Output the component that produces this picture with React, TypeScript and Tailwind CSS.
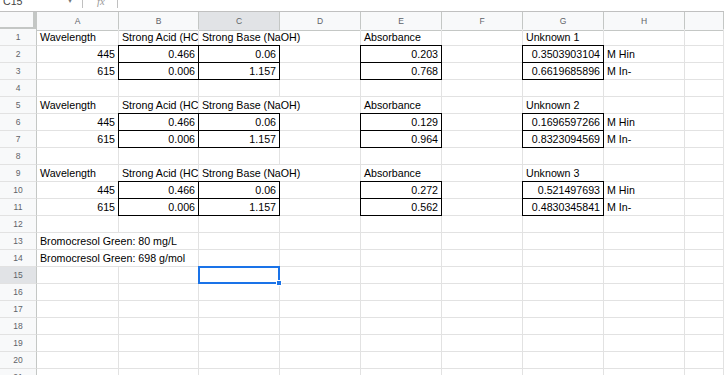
import React from 'react';

type Cell = { c: number; t: string; num?: boolean; box?: boolean; span?: number; clip?: boolean };

const COLS = ['A', 'B', 'C', 'D', 'E', 'F', 'G', 'H', ''];

// one block of readings: header row + two wavelengths
const block = (e: [string, string], unknown: string, g: [string, string]): Cell[][] => [
  [
    { c: 0, t: 'Wavelength' },
    { c: 1, t: 'Strong Acid (HCl)', clip: true },
    { c: 2, t: 'Strong Base (NaOH)', span: 2 },
    { c: 4, t: 'Absorbance' },
    { c: 6, t: unknown },
  ],
  [
    { c: 0, t: '445', num: true },
    { c: 1, t: '0.466', num: true, box: true },
    { c: 2, t: '0.06', num: true, box: true },
    { c: 4, t: e[0], num: true, box: true },
    { c: 6, t: g[0], num: true, box: true },
    { c: 7, t: 'M Hin' },
  ],
  [
    { c: 0, t: '615', num: true },
    { c: 1, t: '0.006', num: true, box: true },
    { c: 2, t: '1.157', num: true, box: true },
    { c: 4, t: e[1], num: true, box: true },
    { c: 6, t: g[1], num: true, box: true },
    { c: 7, t: 'M In-' },
  ],
];

const rows: Cell[][] = [
  ...block(['0.203', '0.768'], 'Unknown 1', ['0.3503903104', '0.6619685896']),
  [],
  ...block(['0.129', '0.964'], 'Unknown 2', ['0.1696597266', '0.8323094569']),
  [],
  ...block(['0.272', '0.562'], 'Unknown 3', ['0.521497693', '0.4830345841']),
  [],
  [{ c: 0, t: 'Bromocresol Green: 80 mg/L', span: 2 }],
  [{ c: 0, t: 'Bromocresol Green: 698 g/mol', span: 2 }],
  [], [], [], [], [], [], [], [],
];

const SEL_ROW = 15;
const SEL_COL = 2;

export default function App() {
  return (
    <div className="h-screen w-full overflow-hidden bg-white font-['Liberation_Sans',Arial,sans-serif] text-black">
      {/* formula bar (scrolled, only the bottom shows) */}
      <div className="h-[12px] overflow-hidden border-b border-[#c0c0c0]">
        <div className="-mt-[7px] flex h-[15px] items-center text-[10.67px] text-[#444]">
          <span className="w-[68px] pl-[3px]">C15</span>
          <span className="w-[14px] text-[8px] text-[#777]">▾</span>
          <span className="h-full w-px bg-[#c0c0c0]" />
          <span className="w-[34px] pl-[14px] font-['Liberation_Serif',serif] italic text-[#999]">fx</span>
          <span className="h-full w-px bg-[#c0c0c0]" />
        </div>
      </div>

      <div className="grid grid-cols-[37px_82px_80px_81px_81px_81px_81px_81px_81px_1fr] auto-rows-[17px]">
        {/* column headers */}
        <div className="h-[19px] border-b-[4px] border-r-[4px] border-[#c4c7c5] bg-[#f8f9fa]" />
        {COLS.map((l, i) => (
          <div
            key={l + i}
            className={`flex h-[19px] items-center justify-center border-b border-r border-[#c4c7c5] text-[8.5px] text-[#5f6368] ${
              i === SEL_COL ? 'bg-[#e1e3e6]' : 'bg-[#f8f9fa]'
            }`}
          >
            {l}
          </div>
        ))}

        {rows.map((row, r) => {
          const n = r + 1;
          const out: React.ReactNode[] = [];
          out.push(
            <div
              key={`h${n}`}
              className={`flex items-center justify-center border-b border-r border-b-[#e2e2e2] border-r-[#c4c7c5] text-[8.5px] text-[#5f6368] ${
                n === SEL_ROW ? 'bg-[#e1e3e6]' : 'bg-[#f8f9fa]'
              }`}
            >
              {n}
            </div>
          );
          let c = 0;
          while (c < COLS.length) {
            const cell = row.find((x) => x.c === c);
            const span = cell?.span ?? 1;
            const selected = n === SEL_ROW && c === SEL_COL;
            out.push(
              <div
                key={`${n}-${c}`}
                className={`relative flex items-end whitespace-nowrap border-b border-r border-[#e2e2e2] px-[3px] pb-[1px] text-[10.67px] leading-[13px] ${
                  span === 2 ? 'col-span-2' : ''
                } ${cell?.num ? 'justify-end' : ''} ${cell?.clip ? 'overflow-hidden' : ''}`}
              >
                {cell?.t}
                {cell?.box && (
                  <span className="pointer-events-none absolute -bottom-px -left-px -right-px -top-px z-10 border border-black" />
                )}
                {selected && (
                  <span className="pointer-events-none absolute -bottom-px -left-px -right-px -top-px z-20 border-2 border-[#1a73e8]">
                    <span className="absolute -bottom-[4px] -right-[4px] h-[6px] w-[6px] border border-white bg-[#1a73e8]" />
                  </span>
                )}
              </div>
            );
            c += span;
          }
          return out;
        })}
      </div>
    </div>
  );
}
